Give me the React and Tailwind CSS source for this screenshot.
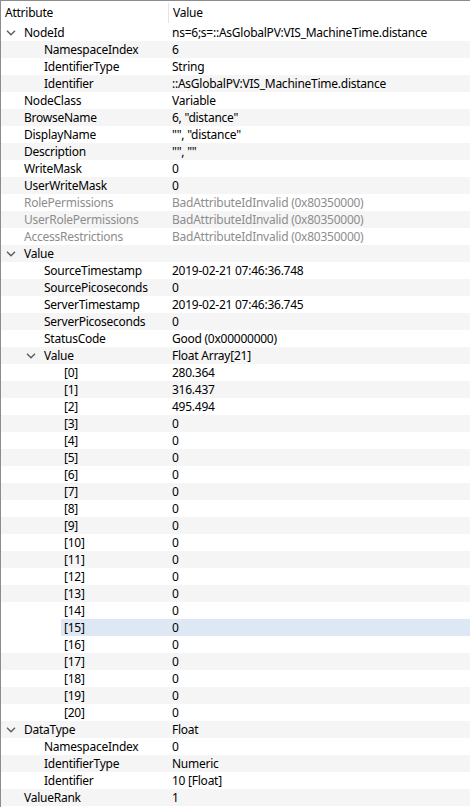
import React from 'react';

const Chevron = () => (
  <svg width="10" height="6" viewBox="0 0 10 6" className="block">
    <path d="M1 0.8 L5 4.8 L9 0.8" fill="none" stroke="#5c5c5c" strokeWidth="1.4" />
  </svg>
);

const BAD = 'BadAttributeIdInvalid (0x80350000)';

const floats = ['280.364', '316.437', '495.494'];

const rows = [
  { level: 0, name: 'NodeId', value: 'ns=6;s=::AsGlobalPV:VIS_MachineTime.distance', open: true },
  { level: 1, name: 'NamespaceIndex', value: '6' },
  { level: 1, name: 'IdentifierType', value: 'String' },
  { level: 1, name: 'Identifier', value: '::AsGlobalPV:VIS_MachineTime.distance' },
  { level: 0, name: 'NodeClass', value: 'Variable' },
  { level: 0, name: 'BrowseName', value: '6, "distance"' },
  { level: 0, name: 'DisplayName', value: '"", "distance"' },
  { level: 0, name: 'Description', value: '"", ""' },
  { level: 0, name: 'WriteMask', value: '0' },
  { level: 0, name: 'UserWriteMask', value: '0' },
  { level: 0, name: 'RolePermissions', value: BAD, dim: true },
  { level: 0, name: 'UserRolePermissions', value: BAD, dim: true },
  { level: 0, name: 'AccessRestrictions', value: BAD, dim: true },
  { level: 0, name: 'Value', value: '', open: true },
  { level: 1, name: 'SourceTimestamp', value: '2019-02-21 07:46:36.748' },
  { level: 1, name: 'SourcePicoseconds', value: '0' },
  { level: 1, name: 'ServerTimestamp', value: '2019-02-21 07:46:36.745' },
  { level: 1, name: 'ServerPicoseconds', value: '0' },
  { level: 1, name: 'StatusCode', value: 'Good (0x00000000)' },
  { level: 1, name: 'Value', value: 'Float Array[21]', open: true },
  ...Array.from({ length: 21 }, (_, i) => ({
    level: 2,
    name: `[${i}]`,
    value: floats[i] || '0',
    selected: i === 15,
  })),
  { level: 0, name: 'DataType', value: 'Float', open: true },
  { level: 1, name: 'NamespaceIndex', value: '0' },
  { level: 1, name: 'IdentifierType', value: 'Numeric' },
  { level: 1, name: 'Identifier', value: '10 [Float]' },
  { level: 0, name: 'ValueRank', value: '1' },
];

const indents = ['w-0', 'w-[20px]', 'w-[40px]'];

const App = () => {
  return (
    <div
      className="w-[470px] h-[807px] overflow-hidden bg-white border-l border-t border-[#8c8c8c] text-[12px] tracking-[-0.25px] text-black"
      style={{ fontFamily: '"Noto Sans", "Open Sans", sans-serif' }}
    >
      {/* Header */}
      <div className="flex h-[23px] items-center">
        <div className="w-[167px] h-full flex items-center pl-[4px]">Attribute</div>
        <div className="w-px h-[20px] bg-[#e5e5e5]" />
        <div className="pl-[4px]">Value</div>
      </div>

      {/* Tree rows */}
      {rows.map((r, i) => (
        <div
          key={i}
          className={`flex h-[17px] leading-[17px] ${i % 2 === 1 && !r.selected ? 'bg-[#f5f5f5]' : ''} ${r.dim ? 'text-[#8d8d8d]' : ''}`}
        >
          <div className={`${indents[r.level]} shrink-0`} />
          <div className="w-[20px] shrink-0 flex items-center justify-center pr-[1px]">
            {r.open && <Chevron />}
          </div>
          <div className={`flex flex-1 min-w-0 ${r.selected ? 'bg-[#dde8f4]' : ''}`}>
            <div className="flex-1 min-w-0 pl-[3px] whitespace-nowrap overflow-hidden">{r.name}</div>
            <div className="w-[302px] shrink-0 pl-[4px] whitespace-nowrap overflow-hidden">{r.value}</div>
          </div>
        </div>
      ))}
    </div>
  );
};

export default App;
